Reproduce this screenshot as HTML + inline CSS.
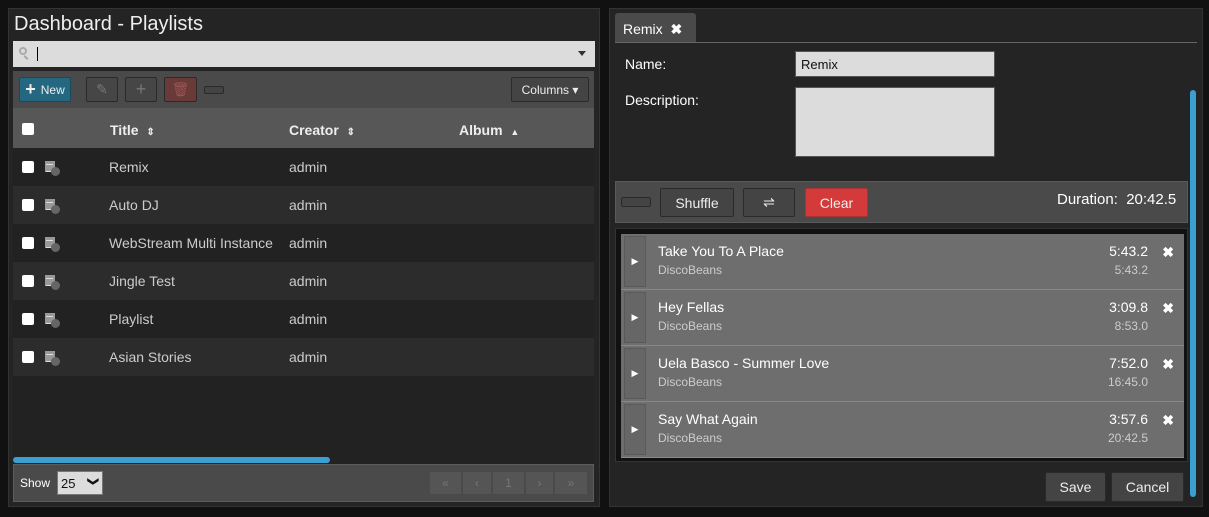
<!DOCTYPE html>
<html><head><style>
*{box-sizing:border-box;margin:0;padding:0}
body{width:1209px;height:517px;background:#111;font-family:"Liberation Sans",sans-serif;color:#ddd;position:relative;overflow:hidden;font-size:14px}
.a{position:absolute}
.panel{background:#242424;border:1px solid #333}
.btn{position:absolute;background:#444;border:1px solid #2a2a2a;border-radius:2px;color:#eee;display:flex;align-items:center;justify-content:center;font-size:14px}
.row{position:absolute;left:13px;width:581px;height:38px}
.row .cb{position:absolute;left:9px;top:13px;width:12px;height:12px;background:#fff;border-radius:2px}
.row .ic{position:absolute;left:32px;top:13px;width:10px;height:11px;background:#999;border-top:2px solid #999}
.row .ic::before{content:"";position:absolute;left:1px;top:1px;width:7px;height:6px;border-top:1px solid #ddd;border-bottom:1px solid #ddd}
.row .ic::after{content:"";position:absolute;left:6px;top:4px;width:9px;height:9px;border-radius:50%;background:#666}
.row .t{position:absolute;left:96px;top:11px;color:#ccc}
.row .c{position:absolute;left:276px;top:11px;color:#ccc}
.item{position:absolute;left:621px;width:563px;height:56px;background:#6e6e6e;border-bottom:1px solid #888}
.item .p{position:absolute;left:3px;top:2px;width:22px;height:51px;background:#666;border:1px solid #5a5a5a;color:#fff;font-size:9px;display:flex;align-items:center;justify-content:center}
.item .n{position:absolute;left:37px;top:9px;color:#fff;font-size:14px}
.item .ar{position:absolute;left:37px;top:29px;color:#ccc;font-size:12px}
.item .d{position:absolute;right:36px;top:9px;color:#fff;font-size:14px}
.item .d2{position:absolute;right:36px;top:29px;color:#ccc;font-size:12px}
.item .x{position:absolute;right:10px;top:10px;color:#fff;font-size:14px;font-weight:bold}
.pg div{background:#555;text-align:center;line-height:22px;flex:none}
</style></head><body>
<div class="a panel" style="left:8px;top:8px;width:592px;height:499px"></div>
<div class="a" style="left:14px;top:13px;font-size:20px;color:#eee">Dashboard - Playlists</div>
<div class="a" style="left:13px;top:41px;width:582px;height:26px;background:#dcdcdc"></div>
<div class="a" style="left:19px;top:47px;width:8px;height:8px;border:2px solid #aaa;border-radius:50%"></div>
<div class="a" style="left:25px;top:55px;width:2px;height:5px;background:#aaa;transform:rotate(-45deg)"></div>
<div class="a" style="left:37px;top:47px;width:1px;height:14px;background:#000"></div>
<div class="a" style="left:578px;top:51px;border-left:4px solid transparent;border-right:4px solid transparent;border-top:5px solid #333"></div>
<div class="a" style="left:13px;top:71px;width:581px;height:37px;background:#4a4a4a"></div>
<div class="btn" style="left:19px;top:77px;width:52px;height:25px;background:#236780;border-color:#1a4a5a;font-size:12px"><b style="font-size:18px;margin-right:5px">+</b>New</div>
<div class="btn" style="left:86px;top:77px;width:32px;height:25px;background:#464646;color:#777">&#9998;</div>
<div class="btn" style="left:125px;top:77px;width:32px;height:25px;background:#464646;color:#777;font-size:18px">+</div>
<div class="btn" style="left:164px;top:77px;width:33px;height:25px;background:#6a3a38;color:#955">&#128465;</div>
<div class="btn" style="left:204px;top:86px;width:20px;height:8px;background:#444"></div>
<div class="btn" style="left:511px;top:77px;width:78px;height:25px;font-size:12px">Columns &#9662;</div>
<div class="a" style="left:13px;top:108px;width:581px;height:40px;background:#575757"></div>
<div class="a" style="left:22px;top:123px;width:12px;height:12px;background:#fff;border-radius:2px"></div>
<div class="a" style="left:110px;top:122px;font-weight:bold;color:#eee">Title &nbsp;<span style="font-size:10px">&#8661;</span></div>
<div class="a" style="left:289px;top:122px;font-weight:bold;color:#eee">Creator &nbsp;<span style="font-size:10px">&#8661;</span></div>
<div class="a" style="left:459px;top:122px;font-weight:bold;color:#eee">Album &nbsp;<span style="font-size:9px">&#9650;</span></div>
<div class="row" style="top:148px;background:#222"><div class="cb"></div><div class="ic"></div><div class="t">Remix</div><div class="c">admin</div></div>
<div class="row" style="top:186px;background:#2c2c2c"><div class="cb"></div><div class="ic"></div><div class="t">Auto DJ</div><div class="c">admin</div></div>
<div class="row" style="top:224px;background:#222"><div class="cb"></div><div class="ic"></div><div class="t">WebStream Multi Instance</div><div class="c">admin</div></div>
<div class="row" style="top:262px;background:#2c2c2c"><div class="cb"></div><div class="ic"></div><div class="t">Jingle Test</div><div class="c">admin</div></div>
<div class="row" style="top:300px;background:#222"><div class="cb"></div><div class="ic"></div><div class="t">Playlist</div><div class="c">admin</div></div>
<div class="row" style="top:338px;background:#2c2c2c"><div class="cb"></div><div class="ic"></div><div class="t">Asian Stories</div><div class="c">admin</div></div>
<div class="a" style="left:13px;top:376px;width:581px;height:88px;background:#222"></div>
<div class="a" style="left:13px;top:457px;width:317px;height:6px;background:#3a9fd1;border-radius:3px"></div>
<div class="a" style="left:13px;top:464px;width:581px;height:38px;background:#4a4a4a;border:1px solid #5c5c5c"></div>
<div class="a" style="left:20px;top:476px;font-size:12px;color:#fff">Show</div>
<div class="a" style="left:57px;top:471px;width:46px;height:24px;background:#dcdcdc;border:1px solid #777;color:#111;font-size:13px;padding:4px 3px">25 <span style="position:absolute;left:31px;top:3px;font-size:11px;font-weight:bold;transform:rotate(90deg)">&#10095;</span></div>
<div class="a pg" style="left:430px;top:472px;width:160px;height:22px;display:flex;gap:2px;color:#777;font-size:12px">
<div style="width:31px">«</div><div style="width:28px">‹</div><div style="width:31px">1</div><div style="width:27px">›</div><div style="width:32px">»</div></div>

<div class="a panel" style="left:609px;top:8px;width:594px;height:499px"></div>
<div class="a" style="left:615px;top:13px;width:81px;height:30px;background:#4a4a4a;border-radius:3px 3px 0 0;color:#fff;padding:8px 8px">Remix &nbsp;<b>&#10006;</b></div>
<div class="a" style="left:615px;top:42px;width:582px;height:1px;background:#666"></div>
<div class="a" style="left:625px;top:56px;color:#fff">Name:</div>
<div class="a" style="left:795px;top:51px;width:200px;height:26px;background:#dcdcdc;border:1px solid #555;color:#111;font-size:13px;padding:5px 5px">Remix</div>
<div class="a" style="left:625px;top:92px;color:#fff">Description:</div>
<div class="a" style="left:795px;top:87px;width:200px;height:70px;background:#dcdcdc;border:1px solid #555"></div>
<div class="a" style="left:1190px;top:90px;width:6px;height:407px;background:#3a9fd1;border-radius:3px"></div>
<div class="a" style="left:615px;top:181px;width:573px;height:42px;background:#4a4a4a;border:1px solid #5a5a5a"></div>
<div class="btn" style="left:621px;top:197px;width:30px;height:10px"></div>
<div class="btn" style="left:660px;top:188px;width:74px;height:29px">Shuffle</div>
<div class="btn" style="left:743px;top:188px;width:52px;height:29px">&#8652;</div>
<div class="btn" style="left:805px;top:188px;width:63px;height:29px;background:#d43a3a;border-color:#a33">Clear</div>
<div class="a" style="left:1057px;top:191px;color:#fff;font-size:15px">Duration:&nbsp; 20:42.5</div>
<div class="a" style="left:615px;top:228px;width:573px;height:234px;background:#111;border:1px solid #333"></div>
<div class="item" style="top:234px"><div class="p">&#9654;</div><div class="n">Take You To A Place</div><div class="ar">DiscoBeans</div><div class="d">5:43.2</div><div class="d2">5:43.2</div><div class="x">&#10006;</div></div>
<div class="item" style="top:290px"><div class="p">&#9654;</div><div class="n">Hey Fellas</div><div class="ar">DiscoBeans</div><div class="d">3:09.8</div><div class="d2">8:53.0</div><div class="x">&#10006;</div></div>
<div class="item" style="top:346px"><div class="p">&#9654;</div><div class="n">Uela Basco - Summer Love</div><div class="ar">DiscoBeans</div><div class="d">7:52.0</div><div class="d2">16:45.0</div><div class="x">&#10006;</div></div>
<div class="item" style="top:402px"><div class="p">&#9654;</div><div class="n">Say What Again</div><div class="ar">DiscoBeans</div><div class="d">3:57.6</div><div class="d2">20:42.5</div><div class="x">&#10006;</div></div>
<div class="btn" style="left:1045px;top:472px;width:61px;height:30px">Save</div>
<div class="btn" style="left:1111px;top:472px;width:73px;height:30px">Cancel</div>
</body></html>
